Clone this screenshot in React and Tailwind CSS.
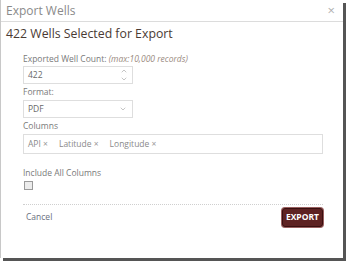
import { ChevronUp, ChevronDown } from 'lucide-react';

const App = () => {
  return (
    <div className="w-[348px] h-[261px] bg-white font-['Open_Sans',sans-serif] overflow-hidden">
      <div className="w-[343px] h-[258px] bg-white border-l border-[#c8c8c8] shadow-[3px_3px_0_0_#555] flex flex-col">
        {/* header */}
        <div className="h-[22px] flex items-center justify-between pl-[5px] pr-[8px] border-b border-[#dcdcdc]">
          <span className="text-[12px] text-[#8a8a8a]">Export Wells</span>
          <span className="text-[13px] text-[#b0b0b0] leading-none">×</span>
        </div>

        <div className="pl-[5px] pt-[4px]">
          <h1 className="text-[12.3px] text-[#4a3a33] leading-[16px]">422 Wells Selected for Export</h1>
        </div>

        <div className="pl-[22px] pr-[21px] pt-[11px] flex flex-col text-[8.5px] text-[#7a7a7a]">
          <div className="leading-[12px]">
            Exported Well Count: <span className="italic text-[#9a8a80]">(max:10,000 records)</span>
          </div>
          <div className="mt-[1px] w-[110px] h-[18px] border border-[#dedede] flex items-center justify-between pl-[4px] pr-[4px]">
            <span className="text-[#6a6a6a]">422</span>
            <div className="flex flex-col items-center text-[#8a8a8a]">
              <ChevronUp size={8} strokeWidth={1.5} />
              <ChevronDown size={8} strokeWidth={1.5} />
            </div>
          </div>

          <div className="mt-[2px] leading-[12px]">Format:</div>
          <div className="mt-[2px] w-[110px] h-[18px] border border-[#dedede] flex items-center justify-between pl-[4px] pr-[5px]">
            <span className="text-[#6a6a6a]">PDF</span>
            <ChevronDown size={8} strokeWidth={1.5} className="text-[#8a8a8a]" />
          </div>

          <div className="mt-[2px] leading-[12px]">Columns</div>
          <div className="mt-[2px] w-[300px] h-[20px] border border-[#dedede] flex items-center gap-[11px] pl-[4px] text-[#8a8a8a]">
            <span>API <span className="text-[#999]">×</span></span>
            <span>Latitude <span className="text-[#999]">×</span></span>
            <span>Longitude <span className="text-[#999]">×</span></span>
          </div>

          <div className="mt-[13px] leading-[12px]">Include All Columns</div>
          <div className="mt-[2px] w-[9px] h-[9px] border border-[#9a9a9a] bg-[#ececec] ml-[1px]"></div>

          <div className="mt-[14px] w-[300px] border-t border-dotted border-[#cfcfcf]"></div>

          <div className="mt-[3px] w-[300px] flex items-center justify-between">
            <span className="pl-[3px] text-[8.5px] text-[#6a7080]">Cancel</span>
            <button className="h-[19px] px-[3px] rounded-[3px] bg-[#5e2222] border border-[#3a1010] shadow-[0_0_0_1px_#9a6060] text-white text-[8.5px] font-bold">
              EXPORT
            </button>
          </div>
        </div>
      </div>
    </div>
  );
};

export default App;
